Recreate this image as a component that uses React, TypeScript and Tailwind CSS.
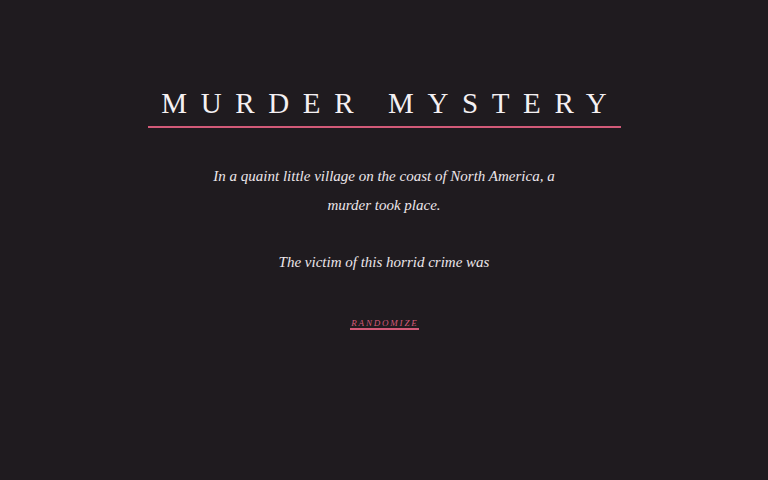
import React, { useState } from 'react';

const victims = ['', 'the mayor', 'the lighthouse keeper', 'the local baker', 'the retired captain'];

const App: React.FC = () => {
  const [victim, setVictim] = useState('');

  const randomize = () => {
    const pick = victims[1 + Math.floor(Math.random() * (victims.length - 1))];
    setVictim(pick);
  };

  return (
    <main
      className="min-h-screen w-full bg-[#1f1b1f] text-[#f1ecef] flex flex-col items-center pt-[84px]"
      style={{ fontFamily: '"Liberation Serif", "DejaVu Serif", serif' }}
    >
      <header className="w-[473px] border-b-2 border-[#d25a78] pb-[4px] flex justify-center">
        <h1 className="whitespace-nowrap text-[29px] leading-[38px] font-normal tracking-[0.47em] pl-[0.47em] text-[#f4f0f2]">
          MURDER MYSTERY
        </h1>
      </header>

      <section className="mt-[34px] w-[380px] text-center italic text-[15px] leading-[29px] text-[#ece6ea]">
        <p>In a quaint little village on the coast of North America, a murder took place.</p>
        <p className="mt-[28px]">The victim of this horrid crime was{victim ? ` ${victim}.` : ''}</p>
      </section>

      <button
        onClick={randomize}
        className="mt-[41px] text-[9px] italic uppercase tracking-[0.2em] pl-[0.2em] text-[#d25a78] border-b-2 border-[#d25a78] pb-0 leading-[10px] cursor-pointer"
      >
        Randomize
      </button>
    </main>
  );
};

export default App;
